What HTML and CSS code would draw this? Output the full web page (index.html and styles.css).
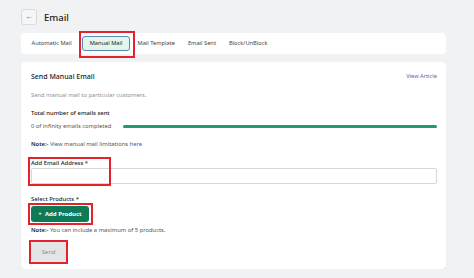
FILE: index.html
```html
<!DOCTYPE html>
<html lang="en">
<head>
    <meta charset="UTF-8">
    <title>Email</title>
    <link rel="stylesheet" href="styles.css">
</head>
<body>
    <div class="page">
        <div class="page-header">
            <button class="back-btn">&larr;</button>
            <h1>Email</h1>
        </div>

        <div class="tabs">
            <span class="tab">Automatic Mail</span>
            <span class="tab active marked">Manual Mail</span>
            <span class="tab">Mail Template</span>
            <span class="tab">Email Sent</span>
            <span class="tab">Block/UnBlock</span>
        </div>

        <div class="card">
            <div class="card-head">
                <h2>Send Manual Email</h2>
                <a class="link" href="#">View Article</a>
            </div>
            <p class="muted">Send manual mail to particular customers.</p>

            <div class="label">Total number of emails sent</div>
            <div class="progress-row">
                <span class="small">0 of infinity emails completed</span>
                <div class="progress"><div class="progress-fill" style="width: 100%"></div></div>
            </div>

            <p class="note"><b>Note:-</b> View manual mail limitations <a class="link" href="#">here</a></p>

            <div class="field marked">
                <div class="label">Add Email Address *</div>
                <input type="text" class="input">
            </div>

            <div class="label label-products">Select Products *</div>
            <button class="btn-green marked">+&nbsp; Add Product</button>
            <p class="note note-products"><b>Note:-</b> You can include a maximum of 5 products.</p>

            <button class="btn-send marked">Send</button>
        </div>
    </div>
</body>
</html>
```

FILE: styles.css
```css
body {
    margin: 0;
    font-family: "Noto Sans", "Open Sans", sans-serif;
    background-color: #f1f2f4;
    color: #202223;
}
.page {
    width: 425px;
    padding: 9px 0 0 21px;
}
.page-header {
    display: flex;
    align-items: center;
    gap: 7px;
    height: 16px;
}
.back-btn {
    width: 16px;
    height: 16px;
    padding: 0;
    border: 1px solid #d9dadd;
    border-radius: 3px;
    background: #f6f6f7;
    color: #5c5f62;
    font-size: 8px;
    line-height: 14px;
}
h1 {
    margin: 0;
    font-size: 9.5px;
    font-weight: 500;
}

/* tabs */
.tabs {
    margin-top: 8px;
    height: 21px;
    background: white;
    border-radius: 4px;
    display: flex;
    align-items: center;
    padding: 0 4px;
    font-size: 5.7px;
    color: #444;
}
.tab {
    padding: 0 6.5px;
    line-height: 13px;
}
.tab.active {
    margin-left: 4px;
    margin-right: 1px;
    background: #e3f6ec;
    border: 1px solid #5b86b5;
    border-radius: 3px;
    height: 13px;
    color: #202223;
}

/* red highlight boxes */
.marked {
    position: relative;
}
.marked::after {
    content: "";
    position: absolute;
    border: 2px solid #e3222c;
    pointer-events: none;
}
.tab.marked::after {
    top: -6px;
    bottom: -8px;
    left: -4px;
    right: -6px;
}
.field.marked::after {
    top: -2px;
    left: -3px;
    width: 79px;
    bottom: -2px;
}
.btn-green.marked::after {
    top: -3px;
    bottom: -3px;
    left: -3px;
    right: -4px;
}
.btn-send.marked::after {
    top: -2px;
    bottom: -2px;
    left: -2px;
    right: -2px;
}

/* card */
.card {
    margin-top: 8px;
    background: white;
    border-radius: 4px;
    padding: 9px 9px 7px 10px;
    box-shadow: 0 1px 1px rgba(0,0,0,0.08);
}
.card-head {
    display: flex;
    justify-content: space-between;
    align-items: center;
    height: 10px;
}
h2 {
    margin: 0;
    font-size: 7px;
    font-weight: 500;
}
.link {
    color: #5468a8;
    text-decoration: none;
    font-size: 5.7px;
}
.muted {
    margin: 10px 0 0;
    font-size: 5.8px;
    line-height: 8px;
    color: #8c9196;
}
.label {
    font-size: 5.9px;
    line-height: 8px;
    font-weight: 500;
    margin-top: 10px;
}
.progress-row {
    display: flex;
    align-items: center;
    gap: 12px;
    margin-top: 5px;
    height: 8px;
}
.small {
    font-size: 5.8px;
    color: #555;
    white-space: nowrap;
}
.progress {
    flex: 1;
    height: 3px;
    background: #d6f0e4;
    border-radius: 2px;
}
.progress-fill {
    height: 100%;
    background: #1f9b6d;
    border-radius: 2px;
}
.note {
    margin: 10px 0 0;
    font-size: 5.8px;
    line-height: 8px;
    color: #555;
}
.note b {
    font-weight: 600;
    color: #202223;
}
.note .link {
    color: #3b5cb8;
    font-size: inherit;
}
.field {
    margin-top: 11px;
}
.field .label {
    margin-top: 0;
}
.input {
    display: block;
    box-sizing: border-box;
    width: 100%;
    height: 16px;
    margin-top: 1px;
    border: 1px solid #d5d7da;
    border-radius: 2px;
}
.label-products {
    margin-top: 11px;
}
.btn-green {
    display: block;
    margin-top: 3px;
    background: #0f7a58;
    color: white;
    border: none;
    border-radius: 3px;
    height: 16px;
    width: 58px;
    padding: 0;
    font-family: inherit;
    font-size: 6px;
    font-weight: 700;
}
.note-products {
    margin-top: 4px;
}
.btn-send {
    display: block;
    margin-top: 8px;
    background: #e4e5e7;
    color: #8c9196;
    border: none;
    border-radius: 3px;
    height: 20px;
    width: 35px;
    padding: 0;
    font-family: inherit;
    font-size: 5.8px;
}
```
